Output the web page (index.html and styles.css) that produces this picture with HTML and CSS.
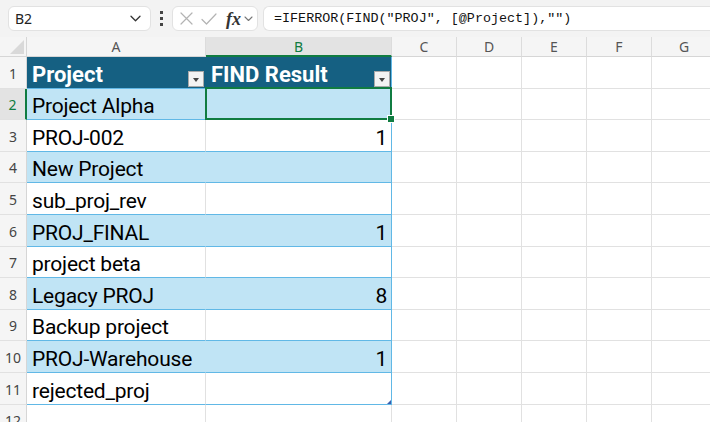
FILE: index.html
```html
<!DOCTYPE html>
<html lang="en">
<head>
    <meta charset="UTF-8">
    <title>FIND Result - Sheet1</title>
    <link rel="stylesheet" href="styles.css">
</head>
<body>
    <div class="toolbar">
        <div class="name-box">
            <span>B2</span>
            <svg width="11" height="7" viewBox="0 0 11 7" fill="none" stroke="#333" stroke-width="1.3" stroke-linecap="round" stroke-linejoin="round"><path d="M1 1.2l4.5 4.5L10 1.2"/></svg>
        </div>
        <div class="dots"><span></span><span></span><span></span></div>
        <div class="fx-box">
            <svg class="ico-x" width="13" height="13" viewBox="0 0 13 13" fill="none" stroke="#b3b3b3" stroke-width="1.2" stroke-linecap="round"><path d="M1 1l11 11M12 1L1 12"/></svg>
            <svg class="ico-ok" width="16" height="12" viewBox="0 0 16 12" fill="none" stroke="#b3b3b3" stroke-width="1.2" stroke-linecap="round" stroke-linejoin="round"><path d="M1 6.5l4.5 4.5L15 1"/></svg>
            <span class="fx">fx</span>
            <svg class="ico-down" width="9" height="6" viewBox="0 0 9 6" fill="none" stroke="#777" stroke-width="1.1" stroke-linecap="round" stroke-linejoin="round"><path d="M1 1l3.5 3.5L8 1"/></svg>
        </div>
        <div class="formula">=IFERROR(FIND("PROJ", [@Project]),"")</div>
    </div>

    <div class="sheet">
        <div class="col-heads">
            <div class="corner"></div>
            <div class="col a">A</div>
            <div class="col b active">B</div>
            <div class="col">C</div>
            <div class="col">D</div>
            <div class="col">E</div>
            <div class="col">F</div>
            <div class="col">G</div>
        </div>

        <div class="row t-head">
            <div class="rnum">1</div>
            <div class="cell a">Project<span class="filter"></span></div>
            <div class="cell b">FIND Result<span class="filter"></span></div>
            <div class="rest"></div>
        </div>
        <div class="row t-row band">
            <div class="rnum active">2</div>
            <div class="cell a">Project Alpha</div>
            <div class="cell b selected"></div>
            <div class="rest"></div>
        </div>
        <div class="row t-row">
            <div class="rnum">3</div>
            <div class="cell a">PROJ-002</div>
            <div class="cell b">1</div>
            <div class="rest"></div>
        </div>
        <div class="row t-row band">
            <div class="rnum">4</div>
            <div class="cell a">New Project</div>
            <div class="cell b"></div>
            <div class="rest"></div>
        </div>
        <div class="row t-row">
            <div class="rnum">5</div>
            <div class="cell a">sub_proj_rev</div>
            <div class="cell b"></div>
            <div class="rest"></div>
        </div>
        <div class="row t-row band">
            <div class="rnum">6</div>
            <div class="cell a">PROJ_FINAL</div>
            <div class="cell b">1</div>
            <div class="rest"></div>
        </div>
        <div class="row t-row">
            <div class="rnum">7</div>
            <div class="cell a">project beta</div>
            <div class="cell b"></div>
            <div class="rest"></div>
        </div>
        <div class="row t-row band">
            <div class="rnum">8</div>
            <div class="cell a">Legacy PROJ</div>
            <div class="cell b">8</div>
            <div class="rest"></div>
        </div>
        <div class="row t-row">
            <div class="rnum">9</div>
            <div class="cell a">Backup project</div>
            <div class="cell b"></div>
            <div class="rest"></div>
        </div>
        <div class="row t-row band">
            <div class="rnum">10</div>
            <div class="cell a">PROJ-Warehouse</div>
            <div class="cell b">1</div>
            <div class="rest"></div>
        </div>
        <div class="row t-row">
            <div class="rnum">11</div>
            <div class="cell a">rejected_proj</div>
            <div class="cell b last"></div>
            <div class="rest"></div>
        </div>
        <div class="row">
            <div class="rnum">12</div>
            <div class="cell a"></div>
            <div class="cell b"></div>
            <div class="rest"></div>
        </div>
    </div>
</body>
</html>
```

FILE: styles.css
```css
:root {
    --head-blue: #156082;
    --band-blue: #c0e4f5;
    --line-blue: #61b8e6;
    --grid: #e1e1e1;
    --excel-green: #107c41;
}

* {
    margin: 0;
    padding: 0;
    box-sizing: border-box;
}

body {
    width: 710px;
    height: 422px;
    overflow: hidden;
    background-color: #fff;
    font-family: Roboto, 'Noto Sans', sans-serif;
    color: #000;
}

/* formula bar */
.toolbar {
    display: flex;
    align-items: center;
    height: 37px;
    padding-left: 8px;
    background-color: #f3f3f3;
}

.name-box {
    width: 143px;
    height: 25px;
    display: flex;
    align-items: center;
    justify-content: space-between;
    padding: 0 9px 0 6px;
    background-color: #fff;
    border: 1px solid #e2e2e2;
    border-radius: 6px;
    font-family: 'Noto Sans', sans-serif;
    font-size: 14px;
    color: #222;
}

.dots {
    width: 21px;
    display: flex;
    flex-direction: column;
    align-items: center;
    gap: 3px;
}

.dots span {
    width: 3px;
    height: 3px;
    background-color: #444;
}

.fx-box {
    width: 86px;
    height: 25px;
    display: flex;
    align-items: center;
    padding-left: 7px;
    background-color: #fff;
    border: 1px solid #e2e2e2;
    border-radius: 6px;
}

.ico-ok {
    margin-left: 8px;
}

.fx {
    margin-left: 9px;
    font-family: 'Liberation Serif', serif;
    font-style: italic;
    font-size: 18px;
    font-weight: 700;
    color: #333;
    line-height: 1;
}

.ico-down {
    margin-left: 3px;
}

.formula {
    flex: 1;
    height: 25px;
    margin-left: 5px;
    display: flex;
    align-items: center;
    padding-left: 10px;
    background-color: #fff;
    border: 1px solid #e2e2e2;
    border-right: none;
    border-radius: 6px 0 0 6px;
    font-family: 'Liberation Mono', monospace;
    font-size: 13.4px;
    color: #111;
    white-space: pre;
}

/* grid */
.col-heads {
    display: flex;
    height: 20px;
    background-color: #f5f5f5;
}

.corner {
    width: 27px;
    flex: none;
    position: relative;
    border-right: 1px solid #d6d6d6;
    border-bottom: 1px solid #d6d6d6;
}

.corner::after {
    content: '';
    position: absolute;
    right: 2px;
    bottom: 2px;
    border-left: 14px solid transparent;
    border-bottom: 14px solid #d9d9d9;
}

.col {
    width: 65px;
    flex: none;
    display: flex;
    align-items: center;
    justify-content: center;
    border-right: 1px solid #dcdcdc;
    border-bottom: 1px solid #d6d6d6;
    font-family: 'Noto Sans', sans-serif;
    font-size: 14px;
    color: #555;
}

.col.a {
    width: 179px;
}

.col.b {
    width: 186px;
}

.col.active {
    background-color: #e3e3e3;
    color: var(--excel-green);
    border-bottom: 2px solid var(--excel-green);
}

.row {
    display: flex;
    height: 31.6px;
}

.rnum {
    width: 27px;
    flex: none;
    display: flex;
    align-items: flex-end;
    justify-content: center;
    padding-bottom: 5px;
    background-color: #f5f5f5;
    border-right: 1px solid #d6d6d6;
    border-bottom: 1px solid var(--grid);
    font-family: 'Noto Sans', sans-serif;
    font-size: 14px;
    color: #444;
}

.rnum.active {
    background-color: #e3e3e3;
    color: var(--excel-green);
    border-right: 2px solid var(--excel-green);
}

.cell {
    flex: none;
    display: flex;
    align-items: flex-end;
    padding: 0 4px 1px 5px;
    border-right: 1px solid var(--grid);
    border-bottom: 1px solid var(--grid);
    font-size: 21px;
    line-height: 24px;
    letter-spacing: -0.2px;
    white-space: nowrap;
}

.cell.a {
    width: 179px;
}

.cell.b {
    width: 186px;
    justify-content: flex-end;
}

.rest {
    flex: 1;
    border-bottom: 1px solid var(--grid);
    background: repeating-linear-gradient(90deg, transparent 0 64px, var(--grid) 64px 65px);
}

/* table */
.t-head .cell,
.t-row .cell {
    border-bottom-color: var(--line-blue);
}

.t-head .cell.b,
.t-row .cell.b {
    border-right-color: var(--line-blue);
}

.t-head .cell {
    position: relative;
    background-color: var(--head-blue);
    border-right-color: var(--head-blue);
    color: #fff;
    font-weight: 700;
    font-size: 22px;
    letter-spacing: 0;
}

.t-head .cell.b {
    justify-content: flex-start;
}

.band .cell {
    background-color: var(--band-blue);
}

.band .cell.a {
    border-right-color: var(--band-blue);
}

.filter {
    position: absolute;
    right: 1px;
    bottom: 1px;
    width: 16px;
    height: 16px;
    background-color: #f3f3f3;
    border: 1px solid #a9a9a9;
}

.filter::after {
    content: '';
    position: absolute;
    left: 4px;
    top: 6px;
    border-left: 3.5px solid transparent;
    border-right: 3.5px solid transparent;
    border-top: 4px solid #444;
}

.selected {
    position: relative;
}

.selected::after {
    content: '';
    position: absolute;
    left: -1px;
    top: -2px;
    right: -1px;
    bottom: -1px;
    border: 2px solid var(--excel-green);
}

.selected::before {
    content: '';
    position: absolute;
    right: -4px;
    bottom: -4px;
    width: 6px;
    height: 6px;
    background-color: var(--excel-green);
    border: 1px solid #fff;
    z-index: 1;
}

.last {
    position: relative;
}

.last::after {
    content: '';
    position: absolute;
    right: 0;
    bottom: 0;
    border-left: 4px solid transparent;
    border-bottom: 4px solid #3b5eae;
}
```
